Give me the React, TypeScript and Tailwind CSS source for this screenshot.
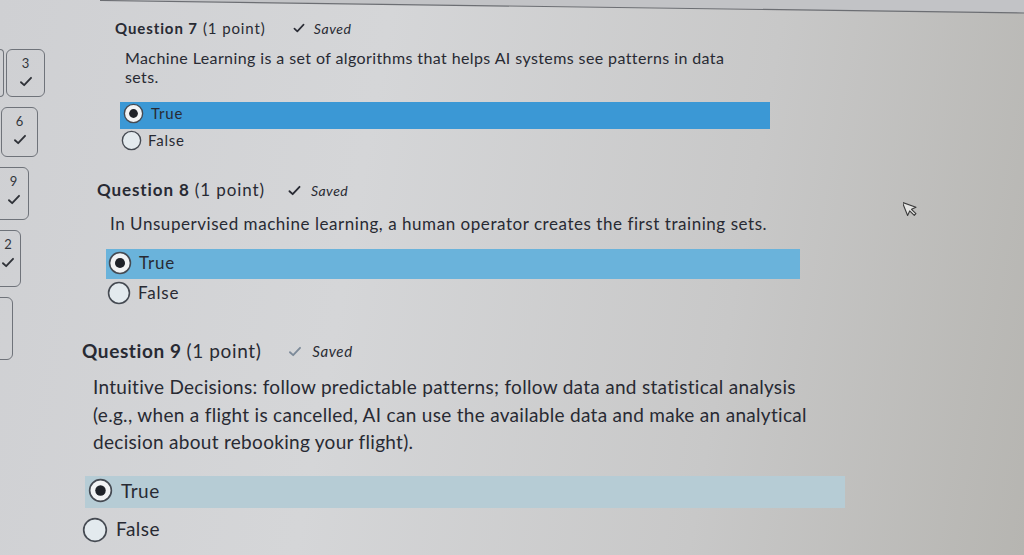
import React from "react";

const font = { fontFamily: "Lato, 'Open Sans', sans-serif" };

function Radio({ checked, size }: { checked: boolean; size: number }) {
  return (
    <svg width={size} height={size} viewBox="0 0 20 20" className="shrink-0">
      <circle cx="10" cy="10" r="8.7" fill={checked ? "#f2f3f4" : "#e3eaee"} stroke="#454a52" strokeWidth="1.3" />
      {checked && <circle cx="10" cy="10" r="4.2" fill="#1f2228" />}
    </svg>
  );
}

function Check({ className }: { className?: string }) {
  return (
    <svg viewBox="0 0 14 12" className={className}>
      <path d="M1.5 6.8 L5 10 L12.5 2" fill="none" stroke="currentColor" strokeWidth="2" strokeLinecap="round" strokeLinejoin="round" />
    </svg>
  );
}

function NavBox({ n, className }: { n: string; className: string }) {
  return (
    <div className={`flex shrink-0 flex-col items-center rounded-[6px] border border-[#6f737a] pt-[6px] text-[#33363c] ${className}`}>
      <span className="text-[13px] leading-[15px]">{n}</span>
      <Check className="mt-[5px] h-[11px] w-[14px] text-[#2f3238]" />
    </div>
  );
}

export default function App() {
  return (
    <div
      style={font}
      className="relative flex h-[555px] w-[1024px] overflow-hidden bg-[linear-gradient(100deg,#cfd0d3_0%,#d5d6d8_35%,#c8c8c8_70%,#b6b5b1_100%)] text-[#282a33]"
    >
      {/* top edge line */}
      <svg className="absolute left-0 top-0" width="1024" height="16">
        <path d="M0 0 L100 0 L1024 13 L1024 0 Z" fill="#c2c3c6" />
        <line x1="100" y1="0.5" x2="1024" y2="13" stroke="#6c6e73" strokeWidth="1.2" />
      </svg>

      {/* sidebar */}
      <div className="flex w-[60px] shrink-0 flex-col pt-[49px]">
        <div className="flex">
          <div className="h-[48px] w-[4px] shrink-0 rounded-r-[4px] border border-l-0 border-[#6f737a]" />
          <NavBox n="3" className="ml-[2px] h-[48px] w-[39px]" />
        </div>
        <NavBox n="6" className="ml-[1px] mt-[10px] h-[50px] w-[37px]" />
        <NavBox n="9" className="-ml-[10px] mt-[10px] h-[53px] w-[39px] pl-[8px]" />
        <NavBox n="2" className="-ml-[17px] mt-[10px] h-[57px] w-[38px] pl-[12px]" />
        <div className="-ml-[25px] mt-[10px] h-[63px] w-[38px] shrink-0 rounded-[6px] border border-[#6f737a]" />
      </div>

      {/* main */}
      <div className="flex flex-1 flex-col">
        {/* Question 7 */}
        <section className="ml-[55px] pt-[18px]">
          <div className="flex h-[20px] items-center text-[15px] tracking-[0.9px]">
            <span className="font-bold">Question 7</span>
            <span className="ml-[5px]">(1 point)</span>
            <Check className="ml-[27px] h-[10px] w-[12px] text-[#2b2d36]" />
            <span className="ml-[9px] text-[14px] italic tracking-[0.6px]">Saved</span>
          </div>
          <p className="ml-[10px] mt-[10px] w-[625px] text-[16px] leading-[19px] tracking-[0.4px]">
            Machine Learning is a set of algorithms that helps AI systems see patterns in data sets.
          </p>
          <div className="ml-[5px] mt-[16px] flex h-[27px] w-[650px] items-start bg-[#3b98d5] pl-[3px] pt-[1px]">
            <Radio checked size={21} />
            <span className="ml-[7px] text-[15px] leading-[21px] tracking-[0.8px]">True</span>
          </div>
          <div className="ml-[6px] flex h-[22px] items-center">
            <Radio checked={false} size={21} />
            <span className="ml-[6px] text-[15px] tracking-[0.8px]">False</span>
          </div>
        </section>

        {/* Question 8 */}
        <section className="ml-[37px] mt-[28px]">
          <div className="flex h-[22px] items-center text-[17px] tracking-[0.9px]">
            <span className="font-bold">Question 8</span>
            <span className="ml-[5px]">(1 point)</span>
            <Check className="ml-[23px] h-[11px] w-[13px]" />
            <span className="ml-[10px] text-[14px] italic tracking-[0.5px]">Saved</span>
          </div>
          <p className="ml-[13px] mt-[12px] text-[17px] leading-[22px] tracking-[0.55px]">
            In Unsupervised machine learning, a human operator creates the first training sets.
          </p>
          <div className="ml-[9px] mt-[14px] flex h-[30px] w-[694px] items-start bg-[#6ab3db] pl-[2px] pt-[2px]">
            <Radio checked size={24} />
            <span className="ml-[7px] text-[17px] leading-[24px] tracking-[0.8px]">True</span>
          </div>
          <div className="ml-[10px] mt-[1px] flex h-[26px] items-center">
            <Radio checked={false} size={24} />
            <span className="ml-[7px] text-[17px] tracking-[0.8px]">False</span>
          </div>
        </section>

        {/* Question 9 */}
        <section className="ml-[22px] mt-[33px]">
          <div className="flex h-[24px] items-center text-[19px] tracking-[0.6px]">
            <span className="font-bold">Question 9</span>
            <span className="ml-[5px]">(1 point)</span>
            <Check className="ml-[27px] h-[11px] w-[14px] text-[#7c8a99]" />
            <span className="ml-[10px] text-[15px] italic tracking-[0.6px]">Saved</span>
          </div>
          <p className="ml-[11px] mt-[10px] w-[730px] text-[19px] leading-[27.5px] tracking-[0.3px]">
            Intuitive Decisions: follow predictable patterns; follow data and statistical analysis (e.g., when a flight is cancelled, AI can use the available data and make an analytical decision about rebooking your flight).
          </p>
          <div className="ml-[3px] mt-[20px] flex h-[32px] w-[760px] items-start bg-[#b6ccd5] pl-[3px] pt-[2px]">
            <Radio checked size={25} />
            <span className="ml-[8px] text-[19px] leading-[25px] tracking-[0.5px]">True</span>
          </div>
          <div className="mt-[7px] flex h-[30px] items-center">
            <Radio checked={false} size={26} />
            <span className="ml-[8px] text-[19px] tracking-[0.5px]">False</span>
          </div>
        </section>
      </div>

      {/* cursor */}
      <svg className="absolute left-[903px] top-[198px]" width="18" height="21" viewBox="0 0 18 21">
        <path d="M2 2 L2 16 L5.6 12.6 L8.2 18.4 L10.4 17.4 L7.9 11.8 L12.8 11.6 Z" fill="#e6e6e4" stroke="#3a3a3a" strokeWidth="1.1" strokeLinejoin="round" transform="rotate(-22 7 10)" />
      </svg>
    </div>
  );
}
